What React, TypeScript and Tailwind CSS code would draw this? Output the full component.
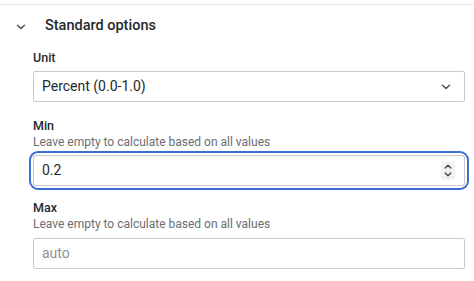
import React from 'react';

function Chevron({ className }: { className?: string }) {
  return (
    <svg width="10" height="6" viewBox="0 0 10 6" className={className} fill="none">
      <path d="M1.5 1.2 L5 4.6 L8.5 1.2" stroke="#4a4f55" strokeWidth="1.4" strokeLinecap="round" strokeLinejoin="round" />
    </svg>
  );
}

function Spinner() {
  return (
    <div className="flex flex-col items-center justify-center w-[14px] h-[19px] rounded-[3px] bg-[#f1f1f2] gap-[3px]">
      <svg width="8" height="5" viewBox="0 0 8 5" fill="none">
        <path d="M1.2 4 L4 1.3 L6.8 4" stroke="#3b3f44" strokeWidth="1.3" strokeLinecap="round" strokeLinejoin="round" />
      </svg>
      <svg width="8" height="5" viewBox="0 0 8 5" fill="none">
        <path d="M1.2 1 L4 3.7 L6.8 1" stroke="#3b3f44" strokeWidth="1.3" strokeLinecap="round" strokeLinejoin="round" />
      </svg>
    </div>
  );
}

export default function App() {
  return (
    <div className="w-[474px] h-[281px] bg-white overflow-hidden font-['Roboto',sans-serif] text-[#24292e]">
      <div className="h-[4px]" />
      <div className="border-t border-[#e6e6e8]">
        <div className="flex items-center h-[45px] pl-[16px] pb-[3px]">
          <Chevron className="mt-[1px]" />
          <span className="ml-[19px] text-[14.5px] font-medium">Standard options</span>
        </div>
        <div className="pl-[33px] pr-[9px] flex flex-col">
          <div className="text-[12.5px] leading-[16px] font-medium">Unit</div>
          <div className="mt-[5px] flex items-center justify-between h-[31px] border border-[#c9cacc] rounded-[2px] pl-[8px] pr-[13px]">
            <span className="text-[14px]">Percent (0.0-1.0)</span>
            <Chevron />
          </div>

          <div className="mt-[16px] text-[12.5px] leading-[16px] font-medium">Min</div>
          <div className="text-[12px] leading-[16px] text-[#6b6e72]">Leave empty to calculate based on all values</div>
          <div className="mt-[5px] rounded-[5px] shadow-[0_0_0_2px_#fff,0_0_0_4px_#3c6fd3]">
            <div className="flex items-center justify-between h-[31px] border border-[#c9cacc] rounded-[2px] pl-[8px] pr-[9px]">
              <span className="text-[14px]">0.2</span>
              <Spinner />
            </div>
          </div>

          <div className="mt-[14px] text-[12.5px] leading-[16px] font-medium">Max</div>
          <div className="text-[12px] leading-[16px] text-[#6b6e72]">Leave empty to calculate based on all values</div>
          <div className="mt-[6px] flex items-center h-[31px] border border-[#c9cacc] rounded-[2px] pl-[8px]">
            <span className="text-[14px] text-[#8d9094]">auto</span>
          </div>
        </div>
      </div>
    </div>
  );
}
